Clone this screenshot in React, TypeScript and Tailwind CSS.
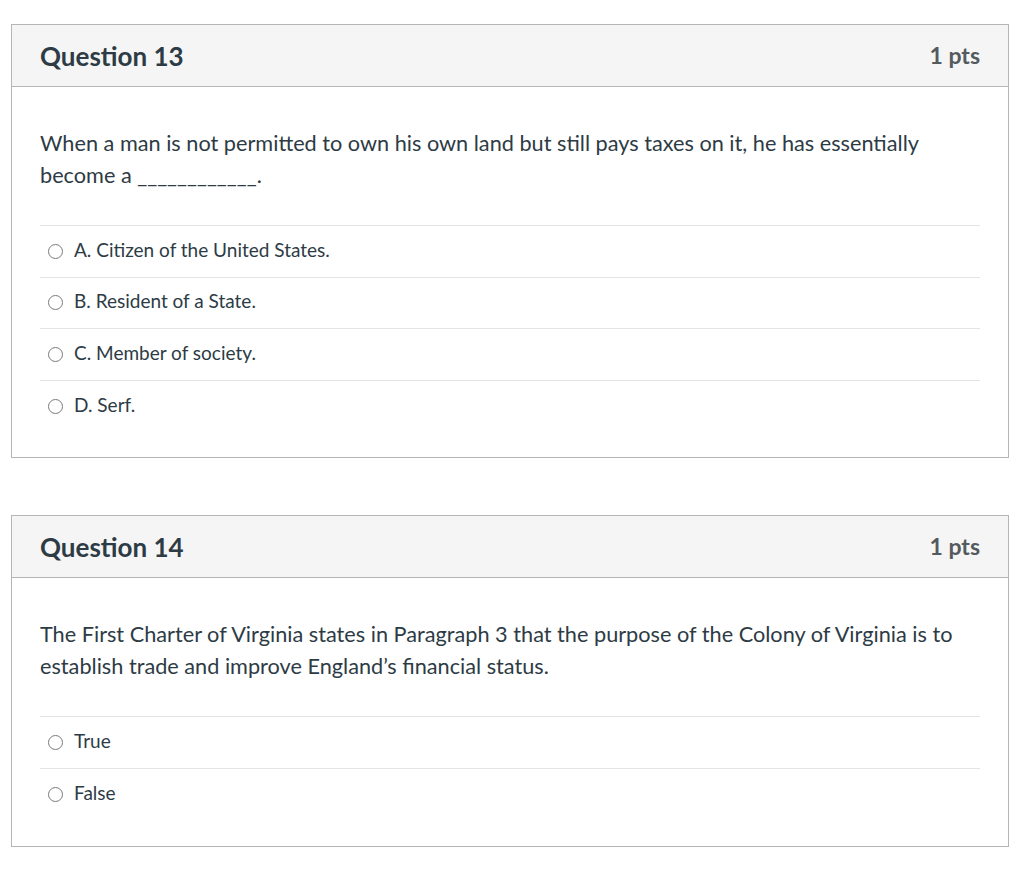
import React from "react";

type Question = {
  title: string;
  points: string;
  text: React.ReactNode;
  answers: string[];
};

const questions: Question[] = [
  {
    title: "Question 13",
    points: "1 pts",
    text: (
      <>
        When a man is not permitted to own his own land but still pays taxes on
        it, he has essentially become a ____________.
      </>
    ),
    answers: [
      "A. Citizen of the United States.",
      "B. Resident of a State.",
      "C. Member of society.",
      "D. Serf.",
    ],
  },
  {
    title: "Question 14",
    points: "1 pts",
    text: (
      <>
        The First Charter of Virginia states in Paragraph 3 that the purpose of
        the Colony of Virginia is to establish trade and improve England’s
        financial status.
      </>
    ),
    answers: ["True", "False"],
  },
];

function QuestionCard({ q }: { q: Question }) {
  return (
    <div className="border border-[#b5b5b5] bg-white">
      {/* header */}
      <div className="flex items-center justify-between h-[62px] px-[28px] bg-[#f5f5f5] border-b border-[#b5b5b5]">
        <h2 className="text-[26px] font-bold text-[#2d3b45] leading-none">
          {q.title}
        </h2>
        <span className="text-[23px] font-bold text-[#555a5e] leading-none">
          {q.points}
        </span>
      </div>

      {/* body */}
      <div className="px-[28px] pt-[40px] pb-[26px]">
        <p className="text-[21.7px] leading-[32px] text-[#2d3b45] mb-[34px]">
          {q.text}
        </p>
        <div>
          {q.answers.map((a) => (
            <div
              key={a}
              className="flex items-center h-[51.6px] border-t border-[#e2e4e6] gap-[11px] pl-[8px]"
            >
              <span className="w-[15px] h-[15px] rounded-full border border-[#7a7a7a] bg-white shrink-0" />
              <span className="text-[19px] leading-none pb-[4px] text-[#2d3b45]">{a}</span>
            </div>
          ))}
        </div>
      </div>
    </div>
  );
}

export default function App() {
  return (
    <div
      className="w-[1024px] h-[880px] bg-white pt-[24px] pl-[11px] pr-[15px] flex flex-col gap-[57px]"
      style={{ fontFamily: "Lato, 'Liberation Sans', sans-serif" }}
    >
      {questions.map((q) => (
        <QuestionCard key={q.title} q={q} />
      ))}
    </div>
  );
}
